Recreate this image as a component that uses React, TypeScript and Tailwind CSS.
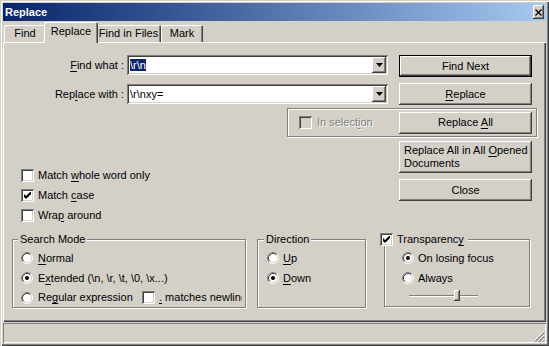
import React from 'react';

const raised = 'shadow-[inset_-1px_-1px_#404040,inset_1px_1px_#ffffff,inset_-2px_-2px_#808080]';
const sunken = 'shadow-[inset_1px_1px_#808080,inset_-1px_-1px_#ffffff,inset_2px_2px_#404040,inset_-2px_-2px_#d4d0c8]';

const U: React.FC<{ children: React.ReactNode }> = ({ children }) => (
  <span className="underline decoration-1 underline-offset-[2px]">{children}</span>
);

const Btn: React.FC<{ children: React.ReactNode; def?: boolean; className?: string }> = ({ children, def, className = '' }) => (
  <div className={`w-[133px] shrink-0 flex items-center justify-center ${def ? 'border border-black' : ''} ${className}`}>
    <div className={`w-full h-full flex items-center justify-center ${raised}`}>{children}</div>
  </div>
);

const Check: React.FC<{ checked?: boolean; disabled?: boolean }> = ({ checked, disabled }) => (
  <span className={`w-[13px] h-[13px] shrink-0 flex items-center justify-center ${disabled ? 'bg-[#d4d0c8]' : 'bg-white'} ${sunken}`}>
    {checked && (
      <svg width="7" height="7" viewBox="0 0 7 7">
        <path d="M0 2 L2 4 L6 0 L7 0 L7 2 L2 7 L0 5 Z" fill="#000" />
      </svg>
    )}
  </span>
);

const Radio: React.FC<{ checked?: boolean }> = ({ checked }) => (
  <svg width="12" height="12" viewBox="0 0 12 12" className="shrink-0">
    <circle cx="6" cy="6" r="5" fill="#fff" />
    <path d="M2.11 9.89 A5.5 5.5 0 0 1 9.89 2.11" stroke="#808080" fill="none" />
    <path d="M9.89 2.11 A5.5 5.5 0 0 1 2.11 9.89" stroke="#ffffff" fill="none" />
    <path d="M2.82 9.18 A4.5 4.5 0 0 1 9.18 2.82" stroke="#404040" fill="none" />
    <path d="M9.18 2.82 A4.5 4.5 0 0 1 2.82 9.18" stroke="#d4d0c8" fill="none" />
    {checked && <circle cx="6" cy="6" r="2" fill="#000" />}
  </svg>
);

const Group: React.FC<{ title: React.ReactNode; className?: string; children: React.ReactNode; titleClass?: string }> = ({ title, className = '', children, titleClass = 'left-[5px]' }) => (
  <div className={`relative shrink-0 border border-[#808080] shadow-[1px_1px_0_#ffffff,inset_1px_1px_0_#ffffff] ${className}`}>
    <div className={`absolute -top-[7px] ${titleClass} bg-[#d4d0c8] px-[2px] leading-[13px] flex items-center`}>{title}</div>
    {children}
  </div>
);

const Combo: React.FC<{ children: React.ReactNode; className?: string }> = ({ children, className = '' }) => (
  <div className={`w-[261px] h-[20px] bg-white flex items-center pl-[3px] pr-[2px] ${sunken} ${className}`}>
    <div className="flex-1 leading-[14px]">{children}</div>
    <div className={`w-[14px] h-[16px] bg-[#d4d0c8] flex items-center justify-center ${raised}`}>
      <svg width="7" height="4" viewBox="0 0 7 4"><path d="M0 0 H7 L3.5 4 Z" fill="#000" /></svg>
    </div>
  </div>
);

const Tab: React.FC<{ children: React.ReactNode; w: string; active?: boolean }> = ({ children, w, active }) => (
  <div
    className={`${w} flex items-center justify-center rounded-t-[2px] bg-[#d4d0c8] shadow-[inset_1px_1px_#ffffff,inset_-1px_0_#404040,inset_-2px_0_#808080] ${
      active ? 'h-[21px] -mb-[1px] relative z-10 -mx-[2px] pb-[2px]' : 'h-[17px]'
    }`}
  >
    {children}
  </div>
);

export default function App() {
  return (
    <div className="w-[549px] h-[346px] bg-[#d4d0c8] p-[3px] flex flex-col text-[11px] text-black font-['Liberation_Sans',Arial,sans-serif] shadow-[inset_1px_1px_#d4d0c8,inset_2px_2px_#ffffff,inset_-1px_-1px_#404040,inset_-2px_-2px_#808080] overflow-hidden select-none">
      {/* title bar */}
      <div className="h-[18px] shrink-0 bg-gradient-to-r from-[#0a246a] to-[#a6caf0] flex items-center justify-between pl-[2px] pr-[2px]">
        <span className="text-white font-bold text-[11px]">Replace</span>
        <div className={`w-[11px] h-[14px] bg-[#d4d0c8] flex items-center justify-center ${raised}`}>
          <svg width="7" height="7" viewBox="0 0 7 7">
            <path d="M0.5 0.5 L6.5 6.5 M6.5 0.5 L0.5 6.5" stroke="#000" strokeWidth="1.4" />
          </svg>
        </div>
      </div>

      {/* tabs */}
      <div className="h-[21px] shrink-0 flex items-end pl-[1px]">
        <Tab w="w-[42px]">Find</Tab>
        <Tab w="w-[54px]" active>Replace</Tab>
        <Tab w="w-[65px]">Find in Files</Tab>
        <Tab w="w-[42px]">Mark</Tab>
      </div>

      {/* panel */}
      <div className="h-[280px] shrink-0 flex flex-col shadow-[inset_1px_1px_#ffffff,inset_-1px_-1px_#404040,inset_-2px_-2px_#808080]">
        <div className="mt-[13px] h-[22px] flex items-start">
          <div className="w-[121px] h-[20px] leading-[20px] text-right">
            <U>F</U>ind what :
          </div>
          <Combo className="ml-[3px]">
            <span className="bg-[#0a246a] text-white">{'\\r\\n'}</span>
          </Combo>
          <Btn def className="ml-[11px] h-[22px]">Find Next</Btn>
        </div>

        <div className="mt-[6px] h-[22px] flex items-start">
          <div className="w-[121px] h-[22px] leading-[22px] text-right">
            Rep<U>l</U>ace with :
          </div>
          <Combo className="ml-[3px] mt-[1px]">{'\\r\\nxy='}</Combo>
          <Btn className="ml-[11px] h-[22px]">
            <span><U>R</U>eplace</span>
          </Btn>
        </div>

        <div className="mt-[3px] ml-[284px] w-[250px] h-[29px] border border-[#808080] shadow-[1px_1px_0_#ffffff,inset_1px_1px_0_#ffffff] flex items-center justify-between pl-[11px] pr-[4px]">
          <div className="flex items-center gap-[5px] text-[#808080] [text-shadow:1px_1px_0_#ffffff]">
            <Check disabled />
            <span>
              In select<U>i</U>on
            </span>
          </div>
          <Btn className="h-[22px]">
            <span>
              Replace <U>A</U>ll
            </span>
          </Btn>
        </div>

        <div className="mt-[4px] h-[60px] flex items-start">
          <div className="w-[396px] pl-[18px] pt-[24px] flex flex-col">
            <div className="h-[20px] flex items-center gap-[4px]">
              <Check />
              <span>
                Match <U>w</U>hole word only
              </span>
            </div>
            <div className="h-[20px] flex items-center gap-[4px]">
              <Check checked />
              <span>
                Match <U>c</U>ase
              </span>
            </div>
            <div className="h-[20px] flex items-center gap-[4px]">
              <Check />
              <span>
                Wra<U>p</U> around
              </span>
            </div>
          </div>
          <div className="flex flex-col">
            <Btn className="h-[32px]">
              <div className="w-full pl-[5px] leading-[13px] text-left">
                Replace All in All <U>O</U>pened
                <br />
                Documents
              </div>
            </Btn>
            <Btn className="h-[22px] mt-[6px]">Close</Btn>
          </div>
        </div>

        <div className="mt-[38px] flex items-start">
          <Group title="Search Mode" className="ml-[9px] w-[234px] h-[69px]">
            <div className="pt-[8px] pl-[8px] flex flex-col">
              <div className="h-[20px] flex items-center gap-[5px]">
                <Radio />
                <span>
                  <U>N</U>ormal
                </span>
              </div>
              <div className="h-[20px] flex items-center gap-[5px]">
                <Radio checked />
                <span>
                  E<U>x</U>tended {'(\\n, \\r, \\t, \\0, \\x...)'}
                </span>
              </div>
              <div className="h-[19px] flex items-center">
                <Radio />
                <span className="w-[109px] pl-[5px] whitespace-nowrap">
                  Re<U>g</U>ular expression
                </span>
                <Check />
                <span className="w-[87px] pl-[4px] overflow-hidden whitespace-nowrap">
                  <U>.</U> matches newline
                </span>
              </div>
            </div>
          </Group>

          <Group title="Direction" className="ml-[11px] w-[109px] h-[69px]" titleClass="left-[6px]">
            <div className="pt-[8px] pl-[9px] flex flex-col">
              <div className="h-[20px] flex items-center gap-[4px]">
                <Radio />
                <span>
                  <U>U</U>p
                </span>
              </div>
              <div className="h-[20px] flex items-center gap-[4px]">
                <Radio checked />
                <span>
                  <U>D</U>own
                </span>
              </div>
            </div>
          </Group>

          <Group
            title={
              <>
                <Check checked />
                <span className="pl-[4px] pr-[2px]">
                  Transparenc<U>y</U>
                </span>
              </>
            }
            className="ml-[18px] w-[146px] h-[68px]"
            titleClass="-left-[7px] px-0"
          >
            <div className="pt-[8px] pl-[17px] flex flex-col">
              <div className="h-[20px] flex items-center gap-[4px]">
                <Radio checked />
                <span>On losing focus</span>
              </div>
              <div className="h-[20px] flex items-center gap-[4px]">
                <Radio />
                <span>Always</span>
              </div>
              <div className="relative mt-[2px] ml-[7px] w-[69px] h-[11px] flex items-center">
                <div className="w-full h-[2px] border-t border-[#808080] border-b border-b-white" />
                <div className={`absolute left-[45px] top-0 w-[6px] h-[11px] bg-[#d4d0c8] ${raised}`} />
              </div>
            </div>
          </Group>
        </div>
      </div>

      {/* status bar */}
      <div className="mt-[1px] h-[20px] shrink-0 flex items-end justify-end shadow-[inset_1px_1px_#808080,inset_-1px_-1px_#ffffff]">
        <svg width="12" height="12" viewBox="0 0 12 12" className="mr-[1px] mb-[1px]">
          <path d="M11 1 L1 11 M11 5 L5 11 M11 9 L9 11" stroke="#ffffff" />
          <path d="M11.7 1.7 L1.7 11.7 M11.7 2.7 L2.7 11.7 M11.7 5.7 L5.7 11.7 M11.7 6.7 L6.7 11.7 M11.7 9.7 L9.7 11.7 M11.7 10.7 L10.7 11.7" stroke="#808080" />
        </svg>
      </div>
    </div>
  );
}
